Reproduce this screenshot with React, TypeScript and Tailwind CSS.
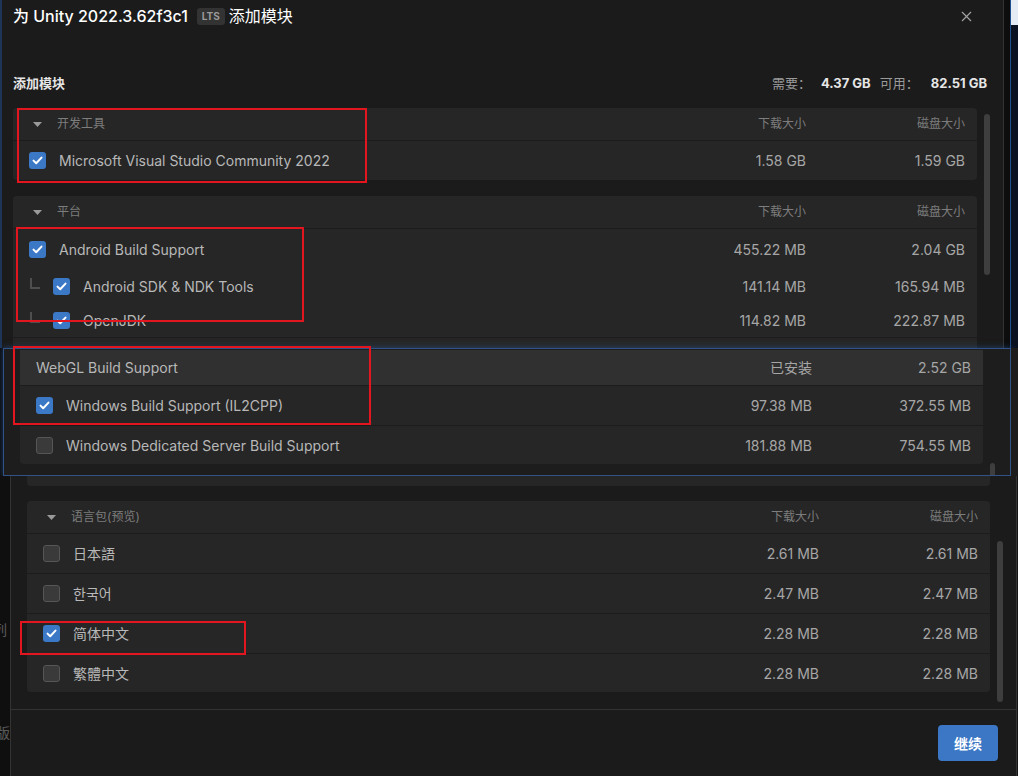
import { X } from 'lucide-react';

const font = { fontFamily: 'Inter, "Noto Sans CJK SC", "Noto Sans CJK KR", sans-serif' };

const Check = ({ checked }: { checked: boolean }) =>
  checked ? (
    <div className="w-[17px] h-[17px] rounded-[3px] bg-[#3b78c6] flex items-center justify-center shrink-0">
      <svg width="11" height="9" viewBox="0 0 11 9" fill="none">
        <path d="M1.5 4.6 L4.2 7.2 L9.5 1.6" stroke="white" strokeWidth="2" strokeLinecap="round" strokeLinejoin="round" />
      </svg>
    </div>
  ) : (
    <div className="w-[17px] h-[17px] rounded-[3px] bg-[#3a3a3a] border border-[#565656] shrink-0" />
  );

const Caret = () => (
  <svg width="9" height="5" viewBox="0 0 9 5" className="shrink-0">
    <path d="M0 0 H9 L4.5 5 Z" fill="#9a9a9a" />
  </svg>
);

const Header = ({ title }: { title: string }) => (
  <div className="flex items-center h-[33px] shrink-0 border-b border-[#1c1c1c] text-[12px] text-[#7d7d7d]">
    <div className="w-[44px] flex justify-center pl-[4px]">
      <Caret />
    </div>
    <div className="flex-1">{title}</div>
    <div className="w-[120px] text-right">下载大小</div>
    <div className="w-[171px] text-right pr-[12px]">磁盘大小</div>
  </div>
);

type RowProps = {
  label: string;
  dl: string;
  disk: string;
  checked?: boolean;
  h?: string;
  sub?: boolean;
  border?: boolean;
  noBox?: boolean;
};

const Row = ({ label, dl, disk, checked = false, h = 'h-[39px]', sub, border, noBox }: RowProps) => (
  <div className={`flex items-center shrink-0 ${h} ${border ? 'border-t border-[#1c1c1c]' : ''} text-[14px]`}>
    {sub ? (
      <div className="w-[40px] pl-[17px] flex items-center h-full">
        <div className="w-[10px] h-[11px] border-l-2 border-b-2 border-[#4e4e4e] -mt-[6px]" />
      </div>
    ) : (
      <div className="w-[16px]" />
    )}
    {!noBox && <Check checked={checked} />}
    <div className={`flex-1 text-[#b8b8b8] ${noBox ? '' : 'pl-[13px]'}`}>{label}</div>
    <div className="w-[140px] text-right text-[#a6a6a6]">{dl}</div>
    <div className="w-[171px] text-right text-[#a6a6a6] pr-[12px]">{disk}</div>
  </div>
);

const RedBox = ({ cls }: { cls: string }) => (
  <div className={`absolute border-2 border-[#e3161f] pointer-events-none ${cls}`} />
);

export default function App() {
  return (
    <div className="relative w-[1018px] h-[776px] overflow-hidden bg-[#161616]" style={font}>
      {/* top part */}
      <div className="flex h-[348px] overflow-hidden">
        <div className="w-[1004px] bg-[#1b1b1b] border-l-2 border-l-[#1e3558] border-r border-r-[#333] flex flex-col">
          <div className="h-[32px] shrink-0 flex items-center pl-[11px] pr-[28px]">
            <div className="flex-1 flex items-center text-[16px] text-white">
              <span className="font-medium">为 Unity 2022.3.62f3c1</span>
              <span className="ml-[9px] mr-[4px] px-[5px] h-[17px] flex items-center rounded-[3px] bg-[#333] text-[10px] font-bold text-[#9a9a9a]">
                LTS
              </span>
              <span>添加模块</span>
            </div>
            <X size={17} strokeWidth={1.5} className="text-[#a5a5a5]" />
          </div>
          <div className="mt-[42px] h-[20px] shrink-0 flex items-center pl-[11px] pr-[16px]">
            <div className="flex-1 text-[13px] font-bold text-[#e6e6e6]">添加模块</div>
            <div className="text-[13px] text-[#9a9a9a] flex items-center">
              需要：<span className="ml-[10px] font-bold text-[#e6e6e6]">4.37 GB</span>
              <span className="ml-[9px]">可用：</span>
              <span className="ml-[12px] font-bold text-[#e6e6e6]">82.51 GB</span>
            </div>
          </div>
          <div className="mt-[14px] shrink-0 flex pl-[11px]">
            <div className="w-[964px] flex flex-col gap-[16px]">
              <div className="rounded-[4px] bg-[#262626]">
                <Header title="开发工具" />
                <Row label="Microsoft Visual Studio Community 2022" dl="1.58 GB" disk="1.59 GB" checked />
              </div>
              <div className="rounded-t-[4px] bg-[#262626]">
                <Header title="平台" />
                <Row label="Android Build Support" dl="455.22 MB" disk="2.04 GB" checked h="h-[40px]" />
                <Row label="Android SDK & NDK Tools" dl="141.14 MB" disk="165.94 MB" checked h="h-[34px]" sub />
                <Row label="OpenJDK" dl="114.82 MB" disk="222.87 MB" checked h="h-[34px]" sub />
                <div className="h-[20px] border-t border-[#1c1c1c]" />
              </div>
            </div>
            <div className="ml-[7px] w-[6px]">
              <div className="mt-[6px] h-[161px] rounded-full bg-[#3e3e3e]" />
            </div>
          </div>
        </div>
        <div className="w-[6px] bg-[#0d0d0d]" />
        <div className="flex-1 flex flex-col border-l border-[#1e4f8f]">
          <div className="h-[25px] bg-[#e4ebf5]" />
          <div className="flex-1 bg-[#0a1221]" />
        </div>
      </div>

      {/* overlay part */}
      <div className="flex h-[128px]">
        <div className="w-[3px] bg-[#0c0c0c]" />
        <div className="w-[1008px] border border-[#2f5387] bg-[#1d1d1d] shadow-[0_0_6px_rgba(40,90,160,0.6)] flex pl-[16px]">
          <div className="w-[963px] pt-[1px]">
            <div className="rounded-b-[4px] bg-[#262626] overflow-hidden">
              <div className="bg-[#303030]">
                <Row label="WebGL Build Support" dl="已安装" disk="2.52 GB" h="h-[35px]" noBox />
              </div>
              <Row label="Windows Build Support (IL2CPP)" dl="97.38 MB" disk="372.55 MB" checked h="h-[40px]" border />
              <Row label="Windows Dedicated Server Build Support" dl="181.88 MB" disk="754.55 MB" h="h-[39px]" border />
            </div>
          </div>
          <div className="ml-[7px] w-[5px] flex flex-col">
            <div className="mt-[114px] flex-1 rounded-t-full bg-[#3e3e3e]" />
          </div>
        </div>
        <div className="flex-1 bg-[#1c1c1c]" />
      </div>

      {/* bottom part */}
      <div className="flex h-[300px]">
        <div className="w-[10px] bg-[#0f0f0f] relative overflow-hidden text-[#5a5a5a] text-[14px]">
          <span className="absolute left-[-7px] top-[143px]">列</span>
          <span className="absolute left-[-4px] top-[246px]">版</span>
        </div>
        <div className="w-[1007px] bg-[#1b1b1b] border-l border-r border-[#333] flex flex-col">
          <div className="h-[233px] shrink-0 flex pl-[16px]">
            <div className="w-[963px]">
              <div className="h-[10px] rounded-b-[4px] bg-[#262626]" />
              <div className="mt-[15px] rounded-[4px] bg-[#262626]">
                <Header title="语言包(预览)" />
                <Row label="日本語" dl="2.61 MB" disk="2.61 MB" h="h-[39px]" />
                <Row label="한국어" dl="2.47 MB" disk="2.47 MB" h="h-[40px]" border />
                <Row label="简体中文" dl="2.28 MB" disk="2.28 MB" checked h="h-[40px]" border />
                <Row label="繁體中文" dl="2.28 MB" disk="2.28 MB" h="h-[39px]" border />
              </div>
            </div>
            <div className="ml-[7px] w-[6px]">
              <div className="mt-[65px] h-[161px] rounded-full bg-[#3e3e3e]" />
            </div>
          </div>
          <div className="flex-1 border-t border-[#333] flex justify-end pr-[18px] pt-[15px]">
            <button className="w-[60px] h-[36px] rounded-[4px] bg-[#3b77c4] text-white text-[14px] font-bold">继续</button>
          </div>
        </div>
        <div className="flex-1 bg-[#151515]" />
      </div>

      <RedBox cls="left-[17px] top-[108px] w-[350px] h-[75px]" />
      <RedBox cls="left-[16px] top-[227px] w-[288px] h-[95px]" />
      <RedBox cls="left-[13px] top-[346px] w-[358px] h-[79px]" />
      <RedBox cls="left-[20px] top-[621px] w-[226px] h-[34px]" />
    </div>
  );
}
